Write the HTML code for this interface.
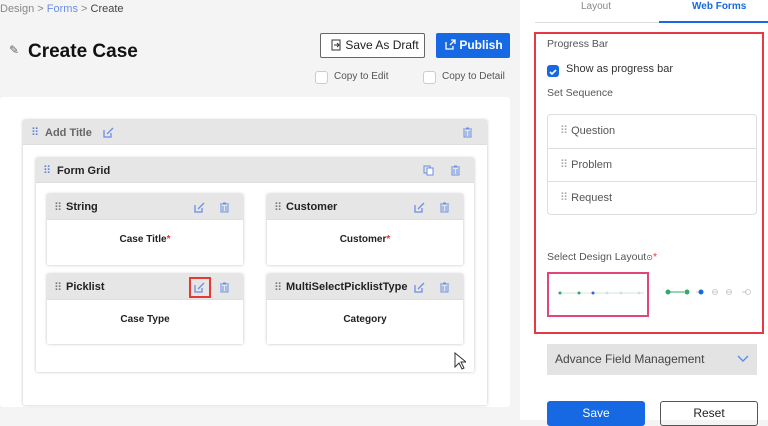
<!DOCTYPE html>
<html><head><meta charset="utf-8"><style>
*{box-sizing:border-box;margin:0;padding:0}
body{width:768px;height:420px;overflow:hidden;background:#f4f4f4;font-family:"Liberation Sans",sans-serif;position:relative;color:#222}
.a{position:absolute}
.hdr{background:#e6e6e6;border-bottom:1px solid #ddd}
.box{background:#fff;box-shadow:0 0 3px rgba(0,0,0,.25);border-radius:2px}
.drag{color:#777;font-size:11px;letter-spacing:-1px}
.ic{position:absolute;width:11px;height:11px}
.b{font-weight:bold}
</style></head><body>
<div class="a" style="left:0;top:3px;font-size:11px;color:#888">Design &gt; <span style="color:#6b8de6">Forms</span> &gt; <span style="color:#444">Create</span></div>
<div class="a" style="left:9px;top:43px;font-size:12px;color:#666">✎</div>
<div class="a b" style="left:28px;top:41px;font-size:19px;color:#111">Create Case</div>
<div class="a" style="left:320px;top:33px;width:105px;height:25px;border:1px solid #666;border-radius:2px;background:#fff;font-size:12px;line-height:23px;padding-left:10px">
<svg width="11" height="12" style="vertical-align:-2px"><rect x="1" y="1" width="8" height="10" fill="none" stroke="#333"/><path d="M3 6h5M6 4l2 2-2 2" stroke="#333" fill="none"/></svg> Save As Draft</div>
<div class="a b" style="left:436px;top:33px;width:74px;height:25px;background:#1668e3;border-radius:2px;color:#fff;font-size:12px;line-height:25px;padding-left:9px">
<svg width="11" height="11" style="vertical-align:-1px"><path d="M1 3v7h7V7M5 6l5-5M6 1h4v4" stroke="#fff" fill="none" stroke-width="1.3"/></svg> Publish</div>
<div class="a" style="left:315px;top:71px;width:13px;height:13px;border:1px solid #ccc;border-radius:3px;background:#fff"></div>
<div class="a" style="left:334px;top:71px;font-size:10px;color:#555">Copy to Edit</div>
<div class="a" style="left:423px;top:71px;width:13px;height:13px;border:1px solid #ccc;border-radius:3px;background:#fff"></div>
<div class="a" style="left:442px;top:71px;font-size:10px;color:#555">Copy to Detail</div>

<div class="a" style="left:0;top:97px;width:510px;height:310px;background:#fff;border-radius:3px"></div>
<div class="a box" style="left:23px;top:120px;width:464px;height:285px"></div>
<div class="a hdr" style="left:23px;top:120px;width:464px;height:25px"></div>
<div class="a drag" style="left:31px;top:126px;color:#5b7fd6">⠿</div>
<div class="a b" style="left:45px;top:127px;font-size:11px;color:#666">Add Title</div>
<svg class="ic" style="left:103px;top:127px"><path d="M1 3v7h7V6M4 7l6-6" stroke="#6b8de6" fill="none" stroke-width="1.3"/></svg>
<svg class="ic" style="left:462px;top:127px"><path d="M1 2h9M4 1h3M2 3v7h7V3M4 4v5M7 4v5" stroke="#6b8de6" fill="none"/></svg>

<div class="a box" style="left:36px;top:158px;width:438px;height:214px"></div>
<div class="a hdr" style="left:36px;top:158px;width:438px;height:25px"></div>
<div class="a drag" style="left:43px;top:164px;color:#5b7fd6">⠿</div>
<div class="a b" style="left:57px;top:165px;font-size:11px">Form Grid</div>
<svg class="ic" style="left:423px;top:165px"><rect x="1" y="1" width="6" height="7" fill="none" stroke="#6b8de6"/><rect x="4" y="3" width="6" height="7" fill="#fff" stroke="#6b8de6"/></svg>
<svg class="ic" style="left:450px;top:165px"><path d="M1 2h9M4 1h3M2 3v7h7V3M4 4v5M7 4v5" stroke="#6b8de6" fill="none"/></svg>

<div class="a box" style="left:47px;top:194px;width:196px;height:71px"></div>
<div class="a hdr" style="left:47px;top:194px;width:196px;height:26px"></div>
<div class="a drag" style="left:54px;top:201px">⠿</div>
<div class="a b" style="left:66px;top:201px;font-size:11px">String</div>
<svg class="ic" style="left:194px;top:202px"><path d="M1 3v7h7V6M4 7l6-6" stroke="#6b8de6" fill="none" stroke-width="1.3"/></svg>
<svg class="ic" style="left:219px;top:202px"><path d="M1 2h9M4 1h3M2 3v7h7V3M4 4v5M7 4v5" stroke="#6b8de6" fill="none"/></svg>
<div class="a b" style="left:47px;top:234px;width:196px;text-align:center;font-size:10px">Case Title<span style="color:#e33">*</span></div>

<div class="a box" style="left:267px;top:194px;width:196px;height:71px"></div>
<div class="a hdr" style="left:267px;top:194px;width:196px;height:26px"></div>
<div class="a drag" style="left:274px;top:201px">⠿</div>
<div class="a b" style="left:286px;top:201px;font-size:11px">Customer</div>
<svg class="ic" style="left:414px;top:202px"><path d="M1 3v7h7V6M4 7l6-6" stroke="#6b8de6" fill="none" stroke-width="1.3"/></svg>
<svg class="ic" style="left:439px;top:202px"><path d="M1 2h9M4 1h3M2 3v7h7V3M4 4v5M7 4v5" stroke="#6b8de6" fill="none"/></svg>
<div class="a b" style="left:267px;top:234px;width:196px;text-align:center;font-size:10px">Customer<span style="color:#e33">*</span></div>

<div class="a box" style="left:47px;top:274px;width:196px;height:70px"></div>
<div class="a hdr" style="left:47px;top:274px;width:196px;height:26px"></div>
<div class="a drag" style="left:54px;top:281px">⠿</div>
<div class="a b" style="left:66px;top:281px;font-size:11px">Picklist</div>
<div class="a" style="left:189px;top:277px;width:22px;height:21px;border:2px solid #e53935"></div>
<svg class="ic" style="left:194px;top:282px"><path d="M1 3v7h7V6M4 7l6-6" stroke="#6b8de6" fill="none" stroke-width="1.3"/></svg>
<svg class="ic" style="left:219px;top:282px"><path d="M1 2h9M4 1h3M2 3v7h7V3M4 4v5M7 4v5" stroke="#6b8de6" fill="none"/></svg>
<div class="a b" style="left:47px;top:314px;width:196px;text-align:center;font-size:10px">Case Type</div>

<div class="a box" style="left:267px;top:274px;width:196px;height:70px"></div>
<div class="a hdr" style="left:267px;top:274px;width:196px;height:26px"></div>
<div class="a drag" style="left:274px;top:281px">⠿</div>
<div class="a b" style="left:286px;top:281px;font-size:11px">MultiSelectPicklistType</div>
<svg class="ic" style="left:414px;top:282px"><path d="M1 3v7h7V6M4 7l6-6" stroke="#6b8de6" fill="none" stroke-width="1.3"/></svg>
<svg class="ic" style="left:439px;top:282px"><path d="M1 2h9M4 1h3M2 3v7h7V3M4 4v5M7 4v5" stroke="#6b8de6" fill="none"/></svg>
<div class="a b" style="left:267px;top:314px;width:196px;text-align:center;font-size:10px">Category</div>
<svg class="a" style="left:454px;top:352px" width="12" height="18"><path d="M1 1v14l4-4 3 6 2-1-3-6h5z" fill="#fff" stroke="#333"/></svg>

<div class="a" style="left:520px;top:0;width:248px;height:420px;background:#fff"></div>
<div class="a" style="left:581px;top:1px;font-size:10px;color:#888">Layout</div>
<div class="a b" style="left:692px;top:1px;font-size:10px;color:#1668e3">Web Forms</div>
<div class="a" style="left:535px;top:22px;width:233px;height:1px;background:#ddd"></div>
<div class="a" style="left:659px;top:21px;width:109px;height:2px;background:#1668e3"></div>
<div class="a" style="left:534px;top:32px;width:230px;height:302px;border:2px solid #e53945"></div>
<div class="a" style="left:547px;top:38px;font-size:10.5px;color:#555">Progress Bar</div>
<div class="a" style="left:547px;top:65px;width:12px;height:12px;background:#1668e3;border-radius:3px"><svg width="12" height="12"><path d="M3 6l2 2 4-4" stroke="#fff" fill="none" stroke-width="1.6"/></svg></div>
<div class="a" style="left:566px;top:63px;font-size:11px;color:#333">Show as progress bar</div>
<div class="a" style="left:547px;top:87px;font-size:10.5px;color:#555">Set Sequence</div>
<div class="a" style="left:547px;top:114px;width:210px;height:101px;border:1px solid #ddd;border-radius:4px"></div>
<div class="a" style="left:547px;top:148px;width:210px;height:1px;background:#ddd"></div>
<div class="a" style="left:547px;top:181px;width:210px;height:1px;background:#ddd"></div>
<div class="a" style="left:560px;top:124px;font-size:11px;color:#555"><span style="color:#aaa">⠿</span> Question</div>
<div class="a" style="left:560px;top:158px;font-size:11px;color:#555"><span style="color:#aaa">⠿</span> Problem</div>
<div class="a" style="left:560px;top:191px;font-size:11px;color:#555"><span style="color:#aaa">⠿</span> Request</div>
<div class="a" style="left:547px;top:251px;font-size:10.5px;color:#555">Select Design Layout<span style="font-size:8px">⊙</span><span style="color:#e33">*</span></div>
<div class="a" style="left:547px;top:272px;width:102px;height:45px;border:2px solid #e0457b"></div>
<svg class="a" style="left:555px;top:288px" width="90" height="10"><path d="M3 5h86" stroke="#cde8d8"/><circle cx="5" cy="5" r="1.5" fill="#3a6"/><circle cx="24" cy="5" r="1.5" fill="#3a6"/><circle cx="38" cy="5" r="1.5" fill="#36d"/><circle cx="52" cy="5" r="1.5" fill="#ddd"/><circle cx="66" cy="5" r="1.5" fill="#ddd"/><circle cx="84" cy="5" r="1.5" fill="#ddd"/></svg>
<svg class="a" style="left:662px;top:286px" width="96" height="14" viewBox="0 0 96 14"><path d="M34 6h5M50 6h5M64 6h5M80 6h5" stroke="#ccc"/><path d="M8 6h14" stroke="#3a6"/><circle cx="6" cy="6" r="2.5" fill="#3a6"/><circle cx="25" cy="6" r="2.5" fill="#3a6"/><circle cx="39" cy="6" r="2.5" fill="#1668e3"/><circle cx="53" cy="6" r="2.5" fill="none" stroke="#ccc"/><circle cx="67" cy="6" r="2.5" fill="none" stroke="#ccc"/><circle cx="86" cy="6" r="2.5" fill="none" stroke="#ccc"/></svg>
<div class="a" style="left:547px;top:344px;width:210px;height:31px;background:#e3e3e3"></div>
<div class="a" style="left:555px;top:352px;font-size:12px;color:#444">Advance Field Management</div>
<svg class="a" style="left:737px;top:355px" width="12" height="8"><path d="M1 1l5 5 5-5" stroke="#5b8de6" fill="none" stroke-width="1.4"/></svg>
<div class="a" style="left:547px;top:401px;width:98px;height:25px;background:#1668e3;border-radius:3px;color:#fff;font-size:12px;text-align:center;line-height:25px">Save</div>
<div class="a" style="left:660px;top:401px;width:98px;height:25px;border:1px solid #555;border-radius:3px;font-size:12px;text-align:center;line-height:23px">Reset</div>
</body></html>
